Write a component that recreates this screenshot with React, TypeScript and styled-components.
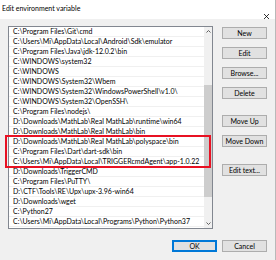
import React from "react";
import styled, { createGlobalStyle } from "styled-components";

const GlobalStyle = createGlobalStyle`
  html, body {
    margin: 0;
    padding: 0;
    background: #f0f0f0;
  }
  body {
    font-family: Lato, "Noto Sans", "Liberation Sans", sans-serif;
    color: #000;
  }
`;

const Dialog = styled.div`
  position: relative;
  width: 275px;
  height: 260px;
  display: flex;
  flex-direction: column;
  background: #f0f0f0;
  border-right: 1px solid #b9b9b9;
`;

const TitleBar = styled.div`
  height: 19px;
  display: flex;
  justify-content: space-between;
  background: #fff;
  padding: 0 6px 0 2px;
`;

const Title = styled.div`
  font-size: 7px;
  line-height: 9px;
  margin-top: 4px;
`;

const Close = styled.svg`
  margin-top: 14px;
`;

const Body = styled.div`
  flex: 1;
  display: flex;
  flex-direction: column;
  padding: 7px 8px 0 8px;
`;

const Main = styled.div`
  display: flex;
  gap: 9px;
  height: 203px;
`;

const List = styled.div`
  width: 205px;
  box-sizing: border-box;
  border: 1px solid #828790;
  background: #fff;
  display: flex;
  overflow: hidden;
`;

const Rows = styled.div`
  flex: 1;
  display: flex;
  flex-direction: column;
  overflow: hidden;
`;

const Row = styled.div`
  height: 10px;
  flex-shrink: 0;
  box-sizing: border-box;
  border-bottom: 1px solid #f0f0f0;
  padding-left: 4px;
  font-size: 7px;
  line-height: 9px;
  white-space: nowrap;
  overflow: hidden;
`;

const ScrollBar = styled.div`
  width: 8px;
  background: #f0f0f0;
  display: flex;
  flex-direction: column;
`;

const ScrollArrow = styled.div`
  height: 9px;
  display: flex;
  align-items: center;
  justify-content: center;
`;

const Track = styled.div`
  flex: 1;
`;

const Thumb = styled.div`
  margin: 49px 0 0 0;
  height: 112px;
  background: #cdcdcd;
`;

const Buttons = styled.div`
  width: 45px;
  display: flex;
  flex-direction: column;
  padding-top: 1px;
`;

const Button = styled.div<{ $gap?: number; $focused?: boolean }>`
  width: 45px;
  height: 12px;
  box-sizing: border-box;
  margin-top: ${(p) => p.$gap ?? 0}px;
  border: 1px solid ${(p) => (p.$focused ? "#0078d7" : "#adadad")};
  box-shadow: ${(p) => (p.$focused ? "inset 0 0 0 1px #0078d7" : "none")};
  background: #e1e1e1;
  font-size: 7px;
  line-height: 10px;
  text-align: center;
`;

const Footer = styled.div`
  display: flex;
  justify-content: flex-end;
  gap: 5px;
  margin-top: 11px;
`;

const Highlight = styled.div`
  position: absolute;
  left: 5px;
  top: 135px;
  width: 206px;
  height: 33px;
  box-sizing: border-box;
  border: 2px solid #e81123;
  pointer-events: none;
`;

const paths = [
  "C:\\Program Files\\Git\\cmd",
  "C:\\Users\\Mi\\AppData\\Local\\Android\\Sdk\\emulator",
  "C:\\Program Files\\Java\\jdk-12.0.2\\bin",
  "C:\\WINDOWS\\system32",
  "C:\\WINDOWS",
  "C:\\WINDOWS\\System32\\Wbem",
  "C:\\WINDOWS\\System32\\WindowsPowerShell\\v1.0\\",
  "C:\\WINDOWS\\System32\\OpenSSH\\",
  "C:\\Program Files\\nodejs\\",
  "D:\\Downloads\\MathLab\\Real MathLab\\runtime\\win64",
  "D:\\Downloads\\MathLab\\Real MathLab\\bin",
  "D:\\Downloads\\MathLab\\Real MathLab\\polyspace\\bin",
  "C:\\Program Files\\Dart\\dart-sdk\\bin",
  "C:\\Users\\Mi\\AppData\\Local\\TRIGGERcmdAgent\\app-1.0.22",
  "D:\\Downloads\\TriggerCMD",
  "C:\\Program Files\\PuTTY\\",
  "D:\\CTF\\Tools\\RE\\Upx\\upx-3.96-win64",
  "D:\\Downloads\\wget",
  "C:\\Python27",
  "C:\\Users\\Mi\\AppData\\Local\\Programs\\Python\\Python37",
  "D:\\Downloads\\ffmpeg\\bin",
];

const Chevron = ({ up }: { up?: boolean }) => (
  <svg width="5" height="3" viewBox="0 0 5 3">
    <polyline
      points={up ? "0.5,2.5 2.5,0.5 4.5,2.5" : "0.5,0.5 2.5,2.5 4.5,0.5"}
      fill="none"
      stroke="#606060"
      strokeWidth="1"
    />
  </svg>
);

const App = () => {
  return (
    <Dialog>
      <GlobalStyle />
      <TitleBar>
        <Title>Edit environment variable</Title>
        <Close width="5" height="5" viewBox="0 0 5 5">
          <path d="M0 0 L5 5 M5 0 L0 5" stroke="#000" strokeWidth="0.8" />
        </Close>
      </TitleBar>
      <Body>
        <Main>
          <List>
            <Rows>
              {paths.map((p) => (
                <Row key={p}>{p}</Row>
              ))}
            </Rows>
            <ScrollBar>
              <ScrollArrow>
                <Chevron up />
              </ScrollArrow>
              <Track>
                <Thumb />
              </Track>
              <ScrollArrow>
                <Chevron />
              </ScrollArrow>
            </ScrollBar>
          </List>
          <Buttons>
            <Button>New</Button>
            <Button $gap={8}>Edit</Button>
            <Button $gap={8}>Browse...</Button>
            <Button $gap={8}>Delete</Button>
            <Button $gap={16}>Move Up</Button>
            <Button $gap={8}>Move Down</Button>
            <Button $gap={17}>Edit text...</Button>
          </Buttons>
        </Main>
        <Footer>
          <Button $focused>OK</Button>
          <Button>Cancel</Button>
        </Footer>
      </Body>
      <Highlight />
    </Dialog>
  );
};

export default App;
